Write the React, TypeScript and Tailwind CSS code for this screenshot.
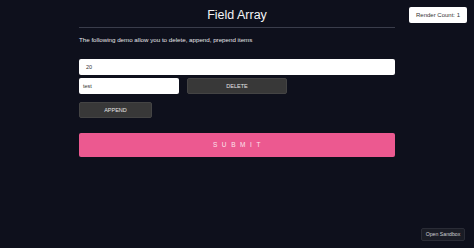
import React from "react";

export default function App() {
  return (
    <div
      className="relative w-full h-[248px] bg-[#0e101c] overflow-hidden"
      style={{ fontFamily: '"Liberation Sans", Arial, sans-serif' }}
    >
      <div className="mx-auto w-[316px] flex flex-col">
        <h1 className="h-[28px] pt-[9px] border-b border-[#3a3d4b] text-center text-[12.5px] leading-[13px] text-[#f4f4f6] font-normal">
          Field Array
        </h1>
        <p className="mt-[8px] text-[6.2px] leading-[8px] text-[#e6e6ea]">
          The following demo allow you to delete, append, prepend items
        </p>
        <div className="mt-[15px] h-[16px] w-full rounded-[2px] bg-white flex items-center pl-[7px] text-[5.5px] text-[#333]">
          20
        </div>
        <div className="mt-[3px] flex gap-[8px]">
          <div className="h-[16px] w-[100px] rounded-[2px] bg-white flex items-center pl-[4px] text-[5.5px] text-[#333]">
            test
          </div>
          <div className="h-[16px] w-[100px] rounded-[2px] bg-[#383838] border border-[#444] flex items-center justify-center text-[5.5px] text-[#e4e4e4]">
            DELETE
          </div>
        </div>
        <div className="mt-[8px] h-[16px] w-[73px] rounded-[2px] bg-[#383838] border border-[#444] flex items-center justify-center text-[5.5px] text-[#e4e4e4]">
          APPEND
        </div>
        <div className="mt-[15px] h-[24px] w-full rounded-[2px] bg-[#ec5990] flex items-center justify-center text-[6.5px] tracking-[4.6px] pl-[4px] text-[#fbe3ec]">
          SUBMIT
        </div>
      </div>
      <div className="absolute top-[7px] right-[7px] w-[58px] h-[16px] rounded-[2px] bg-white flex items-center justify-center text-[6px] text-[#333]">
        Render Count: 1
      </div>
      <div className="absolute bottom-[7px] right-[9px] w-[44px] h-[13px] rounded-[2px] bg-[#1a1c25] border border-[#2a2c36] flex items-center justify-center text-[5.2px] text-[#d0d0d6]">
        Open Sandbox
      </div>
    </div>
  );
}
